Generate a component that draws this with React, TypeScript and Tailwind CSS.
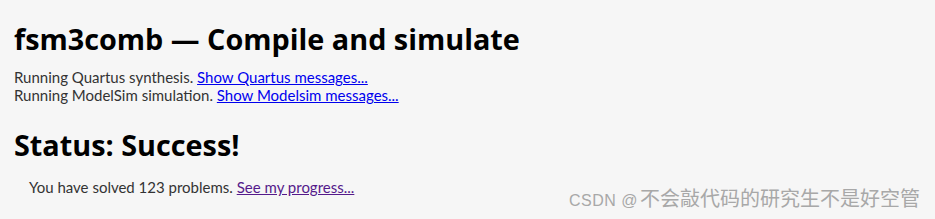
import React from 'react';

export default function App() {
  return (
    <div className="relative w-[935px] h-[219px] bg-[#f6f6f6] overflow-hidden font-['Lato','Liberation_Sans',sans-serif] text-[#333]">
      <div className="px-[14px] pt-[20px]">
        <h1 className="font-['Open_Sans',sans-serif] font-bold text-[28.8px] leading-[38px] text-black">
          fsm3comb — Compile and simulate
        </h1>
        <div className="mt-[10px] text-[15px] leading-[18px]">
          <div>
            Running Quartus synthesis.{' '}
            <a href="#" className="text-[#0000ee] underline">Show Quartus messages...</a>
          </div>
          <div>
            Running ModelSim simulation.{' '}
            <a href="#" className="text-[#0000ee] underline">Show Modelsim messages...</a>
          </div>
        </div>
        <h2 className="mt-[22px] font-['Open_Sans',sans-serif] font-bold text-[28.8px] leading-[38px] text-black">
          Status: Success!
        </h2>
        <p className="mt-[14px] pl-[15px] text-[15px] leading-[18px]">
          You have solved 123 problems.{' '}
          <a href="#" className="text-[#551a8b] underline">See my progress...</a>
        </p>
      </div>
      <div className="absolute right-[15px] bottom-[6px] flex items-baseline text-[#a8a8a8] font-['Liberation_Sans','Noto_Sans_CJK_SC',sans-serif]">
        <span className="text-[16px] tracking-[0.5px] mr-[2px]">CSDN @</span>
        <span className="text-[20px] font-['Noto_Sans_CJK_SC',sans-serif]">不会敲代码的研究生不是好空管</span>
      </div>
    </div>
  );
}
